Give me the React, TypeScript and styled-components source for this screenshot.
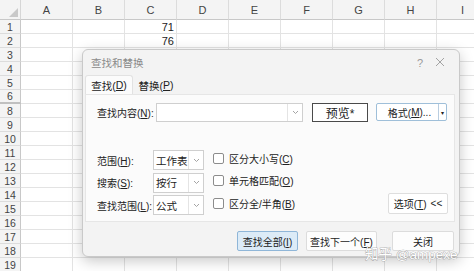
import React from 'react'
import styled, { createGlobalStyle } from 'styled-components'

const GlobalStyle = createGlobalStyle`
  body {
    margin: 0;
    overflow: hidden;
    background: #ffffff;
    font-family: 'Liberation Sans', 'Noto Sans CJK SC', sans-serif;
    text-autospace: no-autospace;
    text-spacing-trim: space-all;
  }
`

const COLS = ['A', 'B', 'C', 'D', 'E', 'F', 'G', 'H', 'I']
const ROWS = [1, 2, 3, 4, 5, 6, 8, 9, 10, 11, 12, 13, 14, 15, 16, 17, 18, 19]
const VALUES: Record<string, string> = { '1C': '71', '2C': '76' }

const Page = styled.div`
  position: relative;
  width: 474px;
  height: 271px;
  overflow: hidden;
`

const Sheet = styled.div`
  display: grid;
  grid-template-columns: 21px repeat(9, 52px);
  grid-template-rows: 20px repeat(18, 14px);
  font-family: 'Liberation Sans', 'Noto Sans', sans-serif;
  font-size: 11px;
  color: #333;
`

const Corner = styled.div`
  position: relative;
  background: #f4f4f4;
  border-right: 1px solid #d6d6d6;
  border-bottom: 1px solid #c8c8c8;

  &::after {
    content: '';
    position: absolute;
    right: 2px;
    bottom: 2px;
    border-style: solid;
    border-width: 0 0 9px 9px;
    border-color: transparent transparent #c9c9c9 transparent;
  }
`

const ColHead = styled.div`
  background: #f4f4f4;
  border-right: 1px solid #dcdcdc;
  border-bottom: 1px solid #c8c8c8;
  display: flex;
  align-items: center;
  justify-content: center;
  padding-top: 1px;
  color: #444;
`

const RowHead = styled.div<{ $gap?: boolean }>`
  background: #f4f4f4;
  border-right: 1px solid #c8c8c8;
  border-bottom: ${({ $gap }) => ($gap ? '2px solid #c0c0c0' : '1px solid #dcdcdc')};
  display: flex;
  align-items: center;
  justify-content: center;
  font-size: 10.5px;
  color: #444;
`

const Cell = styled.div`
  border-right: 1px solid #e3e3e3;
  border-bottom: 1px solid #e3e3e3;
  display: flex;
  align-items: center;
  justify-content: flex-end;
  padding-right: 2px;
  font-size: 11px;
  color: #222;
`

const Dialog = styled.div`
  position: absolute;
  left: 82px;
  top: 49px;
  width: 378px;
  height: 208px;
  box-sizing: border-box;
  background: #f3f3f3;
  border: 1px solid #c9c9c9;
  border-radius: 6px;
  box-shadow: 0 4px 14px rgba(0, 0, 0, 0.22);
  display: flex;
  flex-direction: column;
  font-family: 'Liberation Sans', 'Noto Sans CJK SC', sans-serif;
  font-size: 10px;
  color: #222;
`

const TitleBar = styled.div`
  height: 25px;
  display: flex;
  align-items: center;
  padding: 0 14px 0 8px;
  color: #8a8a8a;
  font-size: 10.5px;
`

const Title = styled.div`
  flex: 1;
`

const TitleIcon = styled.span<{ $w: number }>`
  width: ${({ $w }) => $w}px;
  text-align: center;
  color: #9a9a9a;
  font-size: 11px;
`

const TabRow = styled.div`
  display: flex;
  padding-left: 2px;
  height: 19px;
`

const Tab = styled.div<{ $active?: boolean }>`
  width: ${({ $active }) => ($active ? '46px' : '44px')};
  display: flex;
  align-items: center;
  justify-content: center;
  background: ${({ $active }) => ($active ? '#fbfbfb' : 'transparent')};
  border: 1px solid ${({ $active }) => ($active ? '#e2e2e2' : 'transparent')};
  border-bottom: none;
  border-radius: 3px 3px 0 0;
  font-size: 10.5px;
  color: #222;
`

const Panel = styled.div`
  margin: 0 4px 0 2px;
  height: 128px;
  box-sizing: border-box;
  background: #fbfbfb;
  border: 1px solid #e6e6e6;
  padding: 7px 6px 6px 11px;
  display: flex;
  flex-direction: column;
`

const FindRow = styled.div`
  display: flex;
  align-items: center;
  height: 20px;
`

const FindLabel = styled.div`
  width: 59px;
  white-space: nowrap;
`

const TextBox = styled.div`
  width: 147px;
  height: 19px;
  box-sizing: border-box;
  background: #fff;
  border: 1px solid #cfcfcf;
  display: flex;
  justify-content: flex-end;
  align-items: stretch;
`

const Chevron = styled.div`
  width: 14px;
  display: flex;
  align-items: center;
  justify-content: center;
  border-left: 1px solid #e4e4e4;
  color: #aaa;
`

const PreviewButton = styled.div`
  margin-left: 9px;
  width: 56px;
  height: 19px;
  box-sizing: border-box;
  border: 1px solid #4a4a4a;
  background: #fff;
  display: flex;
  align-items: center;
  justify-content: center;
  font-size: 12px;
  color: #222;
`

const FormatButton = styled.div`
  margin-left: 8px;
  width: 71px;
  height: 18px;
  box-sizing: border-box;
  border: 1px solid #9fbfd9;
  border-radius: 2px;
  background: #fff;
  display: flex;
  align-items: stretch;
  font-size: 10px;
`

const FormatLabel = styled.div`
  flex: 1;
  display: flex;
  align-items: center;
  justify-content: center;
  padding-left: 4px;
`

const SplitArrow = styled.div`
  width: 7px;
  border-left: 1px solid #b9cde0;
  display: flex;
  align-items: center;
  justify-content: center;
  font-size: 6px;
`

const OptionsArea = styled.div`
  margin-top: auto;
  display: flex;
  align-items: flex-end;
`

const OptionGrid = styled.div`
  display: grid;
  grid-template-columns: 56px 51px;
  grid-auto-rows: 20px;
  row-gap: 2.5px;
  align-items: center;
`

const OptLabel = styled.div`
  white-space: nowrap;
`

const SelectBox = styled.div`
  height: 20px;
  box-sizing: border-box;
  background: #fff;
  border: 1px solid #cfcfcf;
  display: flex;
  align-items: stretch;
`

const SelectValue = styled.div`
  flex: 1;
  display: flex;
  align-items: center;
  padding-left: 2px;
  font-size: 10.5px;
`

const CheckList = styled.div`
  margin-left: 9px;
  align-self: flex-start;
  display: grid;
  grid-auto-rows: 20px;
  row-gap: 2.5px;
  align-items: center;
  margin-top: -2px;
`

const CheckItem = styled.label`
  display: flex;
  align-items: center;
  gap: 5px;
  white-space: nowrap;
`

const Box = styled.span`
  width: 9px;
  height: 9px;
  border: 1px solid #8c8c8c;
  border-radius: 2px;
  background: #fff;
`

const OptionsButton = styled.div`
  margin-left: auto;
  margin-bottom: 1px;
  width: 60px;
  height: 21px;
  box-sizing: border-box;
  background: #fff;
  border: 1px solid #dedede;
  border-radius: 2px;
  display: flex;
  align-items: center;
  justify-content: center;
  gap: 4px;
`

const Footer = styled.div`
  display: flex;
  align-items: center;
  justify-content: flex-end;
  padding: 9px 5px 0 0;
`

const FootButton = styled.div<{ $w: number; $primary?: boolean; $gap: number }>`
  width: ${({ $w }) => $w}px;
  height: 20px;
  margin-left: ${({ $gap }) => $gap}px;
  box-sizing: border-box;
  background: ${({ $primary }) => ($primary ? '#dcebf7' : '#fdfdfd')};
  border: 1px solid ${({ $primary }) => ($primary ? '#8fb6d8' : '#dcdcdc')};
  border-radius: 2px;
  display: flex;
  align-items: center;
  justify-content: center;
  font-size: 10px;
  color: #222;
`

const Watermark = styled.div`
  position: absolute;
  left: 365px;
  top: 243px;
  font-size: 13.5px;
  color: #ffffff;
  -webkit-text-stroke: 0.6px #8e8e8e;
  paint-order: stroke fill;
  font-family: 'Liberation Sans', 'Noto Sans CJK SC', sans-serif;
  white-space: nowrap;
`

const U = styled.span`
  text-decoration: underline;
  text-underline-offset: 1px;
`

const Arrow = () => (
  <svg width="7" height="5" viewBox="0 0 7 5">
    <path d="M1 1 L3.5 3.5 L6 1" fill="none" stroke="#9a9a9a" strokeWidth="0.9" />
  </svg>
)

export default function App() {
  return (
    <Page>
      <GlobalStyle />
      <Sheet>
        <Corner />
        {COLS.map((c) => (
          <ColHead key={c}>{c}</ColHead>
        ))}
        {ROWS.map((r) => (
          <React.Fragment key={r}>
            <RowHead $gap={r === 6}>{r}</RowHead>
            {COLS.map((c) => (
              <Cell key={c}>{VALUES[`${r}${c}`] ?? ''}</Cell>
            ))}
          </React.Fragment>
        ))}
      </Sheet>

      <Dialog>
        <TitleBar>
          <Title>查找和替换</Title>
          <TitleIcon $w={30}>?</TitleIcon>
          <TitleIcon $w={10}>
            <svg width="10" height="10" viewBox="0 0 10 10">
              <path d="M1 1 L9 9 M9 1 L1 9" stroke="#9a9a9a" strokeWidth="0.9" />
            </svg>
          </TitleIcon>
        </TitleBar>
        <TabRow>
          <Tab $active>
            查找(<U>D</U>)
          </Tab>
          <Tab>
            替换(<U>P</U>)
          </Tab>
        </TabRow>
        <Panel>
          <FindRow>
            <FindLabel>
              查找内容(<U>N</U>):
            </FindLabel>
            <TextBox>
              <Chevron>
                <Arrow />
              </Chevron>
            </TextBox>
            <PreviewButton>预览*</PreviewButton>
            <FormatButton>
              <FormatLabel>
                格式(<U>M</U>)...
              </FormatLabel>
              <SplitArrow>▾</SplitArrow>
            </FormatButton>
          </FindRow>
          <OptionsArea>
            <OptionGrid>
              <OptLabel>
                范围(<U>H</U>):
              </OptLabel>
              <SelectBox>
                <SelectValue>工作表</SelectValue>
                <Chevron>
                  <Arrow />
                </Chevron>
              </SelectBox>
              <OptLabel>
                搜索(<U>S</U>):
              </OptLabel>
              <SelectBox>
                <SelectValue>按行</SelectValue>
                <Chevron>
                  <Arrow />
                </Chevron>
              </SelectBox>
              <OptLabel>
                查找范围(<U>L</U>):
              </OptLabel>
              <SelectBox>
                <SelectValue>公式</SelectValue>
                <Chevron>
                  <Arrow />
                </Chevron>
              </SelectBox>
            </OptionGrid>
            <CheckList>
              <CheckItem>
                <Box />
                <span>
                  区分大小写(<U>C</U>)
                </span>
              </CheckItem>
              <CheckItem>
                <Box />
                <span>
                  单元格匹配(<U>O</U>)
                </span>
              </CheckItem>
              <CheckItem>
                <Box />
                <span>
                  区分全/半角(<U>B</U>)
                </span>
              </CheckItem>
            </CheckList>
            <OptionsButton>
              <span>
                选项(<U>T</U>)
              </span>
              <span>&lt;&lt;</span>
            </OptionsButton>
          </OptionsArea>
        </Panel>
        <Footer>
          <FootButton $w={61} $gap={0} $primary>
            <span>
              查找全部(<U>I</U>)
            </span>
          </FootButton>
          <FootButton $w={71} $gap={8}>
            <span>
              查找下一个(<U>F</U>)
            </span>
          </FootButton>
          <FootButton $w={62} $gap={15}>
            关闭
          </FootButton>
        </Footer>
      </Dialog>
      <Watermark>知乎 @ampexe</Watermark>
    </Page>
  )
}
